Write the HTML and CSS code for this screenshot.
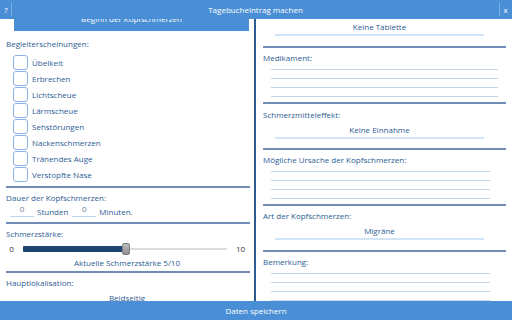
FILE: index.html
```html
<!DOCTYPE html>
<html lang="de">
<head>
  <meta charset="UTF-8" />
  <meta name="viewport" content="width=device-width, initial-scale=1.0"/>
  <title>Tagebucheintrag machen</title>
  <link rel="stylesheet" href="styles.css">
</head>
<body>

<div class="app">
  <header class="topbar">
    <div class="topbtn help">?</div>
    <div class="title">Tagebucheintrag machen</div>
    <div class="topbtn close">x</div>
  </header>

  <main class="panes">
    <!-- Left column (scrolled a little) -->
    <section class="pane left">
      <div class="scroll">
        <button class="startbtn">Beginn der Kopfschmerzen</button>

        <div class="label first">Begleiterscheinungen:</div>
        <ul class="checks">
          <li><span class="box"></span>Übelkeit</li>
          <li><span class="box"></span>Erbrechen</li>
          <li><span class="box"></span>Lichtscheue</li>
          <li><span class="box"></span>Lärmscheue</li>
          <li><span class="box"></span>Sehstörungen</li>
          <li><span class="box"></span>Nackenschmerzen</li>
          <li><span class="box"></span>Tränendes Auge</li>
          <li><span class="box"></span>Verstopfte Nase</li>
        </ul>
        <div class="divider d-checks"></div>

        <div class="label">Dauer der Kopfschmerzen:</div>
        <div class="duration">
          <span class="num">0</span>
          <span class="unit">Stunden</span>
          <span class="num">0</span>
          <span class="unit">Minuten.</span>
        </div>
        <div class="divider d-duration"></div>

        <div class="label">Schmerzstärke:</div>
        <div class="slider">
          <span class="end">0</span>
          <div class="track">
            <div class="fill" style="width: 49%"></div>
            <div class="thumb"></div>
          </div>
          <span class="end">10</span>
        </div>
        <div class="current">Aktuelle Schmerzstärke 5/10</div>
        <div class="divider d-slider"></div>

        <div class="label">Hauptlokalisation:</div>
        <div class="value">Beidseitig</div>
      </div>
    </section>

    <!-- Right column -->
    <section class="pane right">
      <div class="spinner top">Keine Tablette</div>
      <div class="divider d-spin"></div>

      <div class="label">Medikament:</div>
      <div class="lines wide">
        <div class="line"></div><div class="line"></div><div class="line"></div><div class="line"></div>
      </div>
      <div class="divider d-lines"></div>

      <div class="label l-effect">Schmerzmitteleffekt:</div>
      <div class="spinner">Keine Einnahme</div>
      <div class="divider d-spin d-tight"></div>

      <div class="label">Mögliche Ursache der Kopfschmerzen:</div>
      <div class="lines">
        <div class="line"></div><div class="line"></div><div class="line"></div><div class="line"></div>
      </div>
      <div class="divider d-lines"></div>

      <div class="label">Art der Kopfschmerzen:</div>
      <div class="spinner">Migräne</div>
      <div class="divider d-spin"></div>

      <div class="label">Bemerkung:</div>
      <div class="lines">
        <div class="line"></div><div class="line"></div><div class="line"></div><div class="line"></div>
      </div>
    </section>
  </main>

  <footer class="savebar">Daten speichern</footer>
</div>

</body>
</html>
```

FILE: styles.css
```css
* { box-sizing: border-box; margin: 0; padding: 0; }

body {
  font-family: 'Open Sans', 'Noto Sans', sans-serif;
  font-size: 8px;
  background: #ffffff;
  color: #2e5c93;
}

.app {
  width: 512px;
  height: 320px;
  display: flex;
  flex-direction: column;
  overflow: hidden;
}

/* Top bar */
.topbar {
  height: 19px;
  background: #4a8fd5;
  color: #ffffff;
  display: flex;
  align-items: center;
}

.topbtn {
  width: 12px;
  height: 19px;
  line-height: 19px;
  text-align: center;
  font-size: 8px;
  position: relative;
}

.topbtn.help::after,
.topbtn.close::before {
  content: '';
  position: absolute;
  top: 3px;
  bottom: 3px;
  width: 1px;
  background: #79aee6;
}

.topbtn.help::after { right: 0; }
.topbtn.close { width: 13px; }
.topbtn.close::before { left: 0; }

.title {
  flex: 1;
  text-align: center;
  font-size: 8px;
  line-height: 19px;
}

/* Panes */
.panes {
  flex: 1;
  display: flex;
  overflow: hidden;
}

.pane { overflow: hidden; }

.pane.left { width: 254px; }

.pane.right {
  flex: 1;
  border-left: 2px solid #2d5a8f;
}

.scroll { margin-top: -13px; }

.startbtn {
  display: block;
  width: 235px;
  height: 25px;
  margin-left: 14px;
  background: #4a8fd5;
  color: #ffffff;
  border: none;
  font-family: 'Open Sans', 'Noto Sans', sans-serif;
  font-size: 8px;
  line-height: 25px;
}

.label {
  line-height: 10px;
  padding-left: 6px;
  margin-top: 5px;
}

.label.first { margin-top: 8px; }

.right .label { padding-left: 7px; }
.right .label.l-effect { margin-top: 6px; }

.divider {
  height: 2px;
  background: #6f8db6;
  margin: 4px 4px 0 6px;
}

.right .divider { margin: 5px 6px 0 7px; }
.right .divider.d-spin { margin-top: 10px; }
.right .divider.d-tight { margin-top: 9px; }

/* Checkboxes */
.checks {
  list-style: none;
  margin-top: 5px;
}

.checks li {
  height: 16px;
  display: flex;
  align-items: center;
  padding-left: 13px;
}

.box {
  width: 15px;
  height: 15px;
  border: 1.5px solid #8db5e4;
  border-radius: 3px;
  margin-right: 4px;
}

/* Duration */
.duration {
  display: flex;
  align-items: flex-end;
  height: 14px;
  padding-left: 10px;
}

.num {
  width: 24px;
  height: 14px;
  padding-top: 1px;
  line-height: 10px;
  text-align: center;
  color: #6b7f96;
  border-bottom: 1px solid #bcd5f0;
}

.unit {
  line-height: 10px;
  margin: 0 4px 0 3px;
}

.d-duration { margin-top: 5px; }

/* Slider */
.slider {
  display: flex;
  align-items: center;
  height: 12px;
  margin-top: 4px;
}

.slider .end {
  width: 23px;
  text-align: center;
  line-height: 10px;
  color: #333333;
}

.slider .end:last-child { width: 27px; }

.track {
  position: relative;
  width: 204px;
  height: 2px;
  background: #dddddd;
}

.fill {
  position: absolute;
  left: 0;
  top: -2px;
  height: 6px;
  background: #1e4572;
  border-radius: 1px;
}

.thumb {
  position: absolute;
  left: 99px;
  top: -5px;
  width: 8px;
  height: 12px;
  border-radius: 2px;
  background: linear-gradient(#bdbdbd, #8e8e8e);
  border: 1px solid #808080;
}

.current {
  text-align: center;
  line-height: 10px;
  margin-top: 3px;
}

.d-slider { margin-top: 3px; }

.value {
  text-align: center;
  line-height: 10px;
  margin-top: 5px;
}

/* Right column fields */
.spinner {
  width: 209px;
  margin-left: 19px;
  text-align: center;
  line-height: 10px;
  padding: 5px 0 2px;
  border-bottom: 2px solid #d2e4f8;
}

.spinner.top { padding-top: 3px; }

.lines {
  margin: -2px 0 0 15px;
  width: 219px;
}

.lines.wide { width: 227px; }

.line {
  height: 9px;
  border-bottom: 1px solid #c6d6e8;
}

/* Bottom bar */
.savebar {
  height: 19px;
  line-height: 19px;
  background: #4a8fd5;
  color: #ffffff;
  text-align: center;
  font-size: 8px;
}
```
